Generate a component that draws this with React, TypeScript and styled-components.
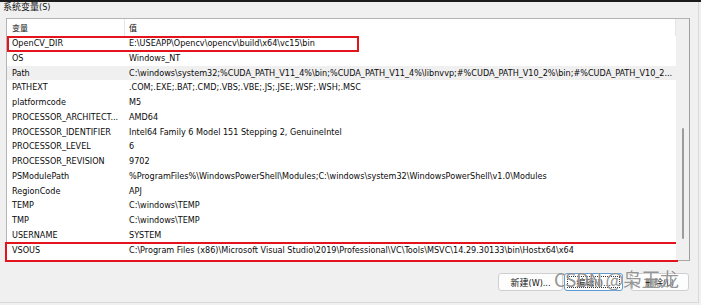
import React from "react";
import styled, { createGlobalStyle } from "styled-components";

const Global = createGlobalStyle`
  html, body { margin: 0; padding: 0; background: #f0f0f0; }
  body { font-family: "DejaVu Sans Condensed", "Noto Sans CJK SC", sans-serif; }
`;

const Window = styled.div`
  position: relative;
  width: 701px;
  height: 305px;
  overflow: hidden;
  background: #f0f0f0;
  display: flex;
  flex-direction: column;
`;

const TopEdge = styled.div`
  height: 2px;
  background: #1c1c1c;
  flex: none;
`;

const Dialog = styled.div`
  box-sizing: border-box;
  width: 699px;
  height: 301px;
  padding: 0 8px 0 6px;
  border-right: 1px solid #d9d9d9;
  border-bottom: 1px solid #d9d9d9;
  display: flex;
  flex-direction: column;
`;

const GroupTitle = styled.div`
  margin-left: -3px;
  height: 10px;
  line-height: 10px;
  margin-bottom: 6px;
  font-size: 9px;
  color: #111;
  white-space: nowrap;
`;

const ListBox = styled.div`
  box-sizing: border-box;
  width: 684px;
  height: 243px;
  border: 1px solid #b4b4b4;
  border-right-color: #a0a0a0;
  border-bottom-color: #a8a8a8;
  background: #ffffff;
  display: flex;
`;

const ListContent = styled.div`
  flex: 1;
  min-width: 0;
  display: flex;
  flex-direction: column;
`;

const Header = styled.div`
  height: 17px;
  display: grid;
  grid-template-columns: 117px 1fr;
  border-right: 1px solid #e5e5e5;
  font-size: 8px;
  color: #111;
`;

const HeaderCell = styled.div<{ $divider?: boolean }>`
  display: flex;
  align-items: center;
  padding-left: ${(p) => (p.$divider ? "4px" : "5px")};
  border-left: ${(p) => (p.$divider ? "1px solid #e5e5e5" : "none")};
`;

const Rows = styled.div`
  display: grid;
  grid-auto-rows: 14.75px;
`;

const Row = styled.div<{ $shaded?: boolean }>`
  position: relative;
  display: grid;
  grid-template-columns: 117px 1fr;
  background: ${(p) => (p.$shaded ? "#f0f0f0" : "transparent")};
  font-size: 9px;
  line-height: 14.75px;
  color: #0a0a0a;
  white-space: nowrap;
`;

const Cell = styled.div`
  padding-left: 5px;
  overflow: hidden;
  text-overflow: ellipsis;
`;

const Mark = styled.div<{ $left: number; $width: number; $top: number; $height: number }>`
  position: absolute;
  left: ${(p) => p.$left}px;
  top: ${(p) => p.$top}px;
  width: ${(p) => p.$width}px;
  height: ${(p) => p.$height}px;
  box-sizing: border-box;
  border: 2px solid #e3141c;
  pointer-events: none;
`;

const ScrollTrack = styled.div`
  width: 13px;
  flex: none;
  background: #f0f0f0;
  position: relative;
`;

const Thumb = styled.div`
  position: absolute;
  left: 6px;
  top: 109px;
  width: 2px;
  height: 111px;
  border-radius: 1px;
  background: #9c9c9c;
`;

const ButtonRow = styled.div`
  margin-top: 12px;
  padding-right: 1px;
  display: flex;
  justify-content: flex-end;
`;

const Button = styled.div<{ $w: number; $ml?: number; $focus?: boolean }>`
  box-sizing: border-box;
  width: ${(p) => p.$w}px;
  margin-left: ${(p) => p.$ml ?? 0}px;
  height: 18px;
  border: 1px solid ${(p) => (p.$focus ? "#5b9bd5" : "#cfcfcf")};
  border-radius: 3px;
  background: #fdfdfd;
  font-size: 9px;
  color: #111;
  display: flex;
  align-items: center;
  justify-content: center;
  position: relative;
  white-space: nowrap;
  &::after {
    content: "";
    display: ${(p) => (p.$focus ? "block" : "none")};
    position: absolute;
    inset: 2px;
    border: 1px dotted #333;
  }
`;

const Watermark = styled.div`
  position: absolute;
  left: 554px;
  top: 267px;
  font-family: "Noto Sans CJK SC", "Noto Sans", sans-serif;
  font-size: 19px;
  line-height: 24px;
  color: rgba(95, 95, 95, 0.68);
  letter-spacing: -0.5px;
  text-shadow: 0 0 1px rgba(255, 255, 255, 0.9);
  white-space: nowrap;
  pointer-events: none;
`;

const rows: [string, string][] = [
  ["OpenCV_DIR", "E:\\USEAPP\\Opencv\\opencv\\build\\x64\\vc15\\bin"],
  ["OS", "Windows_NT"],
  [
    "Path",
    "C:\\windows\\system32;%CUDA_PATH_V11_4%\\bin;%CUDA_PATH_V11_4%\\libnvvp;#%CUDA_PATH_V10_2%\\bin;#%CUDA_PATH_V10_2...",
  ],
  ["PATHEXT", ".COM;.EXE;.BAT;.CMD;.VBS;.VBE;.JS;.JSE;.WSF;.WSH;.MSC"],
  ["platformcode", "M5"],
  ["PROCESSOR_ARCHITECT...", "AMD64"],
  ["PROCESSOR_IDENTIFIER", "Intel64 Family 6 Model 151 Stepping 2, GenuineIntel"],
  ["PROCESSOR_LEVEL", "6"],
  ["PROCESSOR_REVISION", "9702"],
  [
    "PSModulePath",
    "%ProgramFiles%\\WindowsPowerShell\\Modules;C:\\windows\\system32\\WindowsPowerShell\\v1.0\\Modules",
  ],
  ["RegionCode", "APJ"],
  ["TEMP", "C:\\windows\\TEMP"],
  ["TMP", "C:\\windows\\TEMP"],
  ["USERNAME", "SYSTEM"],
  [
    "VSOUS",
    "C:\\Program Files (x86)\\Microsoft Visual Studio\\2019\\Professional\\VC\\Tools\\MSVC\\14.29.30133\\bin\\Hostx64\\x64",
  ],
];

export default function App() {
  return (
    <Window>
      <Global />
      <TopEdge />
      <Dialog>
        <GroupTitle>系统变量(S)</GroupTitle>
        <ListBox>
          <ListContent>
            <Header>
              <HeaderCell>变量</HeaderCell>
              <HeaderCell $divider>值</HeaderCell>
            </Header>
            <Rows>
              {rows.map(([name, value]) => (
                <Row key={name} $shaded={name === "Path"}>
                  <Cell>{name}</Cell>
                  <Cell>{value}</Cell>
                  {name === "OpenCV_DIR" && (
                    <Mark $left={0} $top={0} $width={352} $height={16} />
                  )}
                  {name === "VSOUS" && (
                    <Mark $left={-2} $top={-1} $width={673} $height={20} />
                  )}
                </Row>
              ))}
            </Rows>
          </ListContent>
          <ScrollTrack>
            <Thumb />
          </ScrollTrack>
        </ListBox>
        <ButtonRow>
          <Button $w={65}>新建(W)...</Button>
          <Button $w={59} $ml={1} $focus>编辑(I)...</Button>
          <Button $w={59} $ml={7}>删除(L)</Button>
        </ButtonRow>
      </Dialog>
      <Watermark>CSDN @枭玉龙</Watermark>
    </Window>
  );
}
